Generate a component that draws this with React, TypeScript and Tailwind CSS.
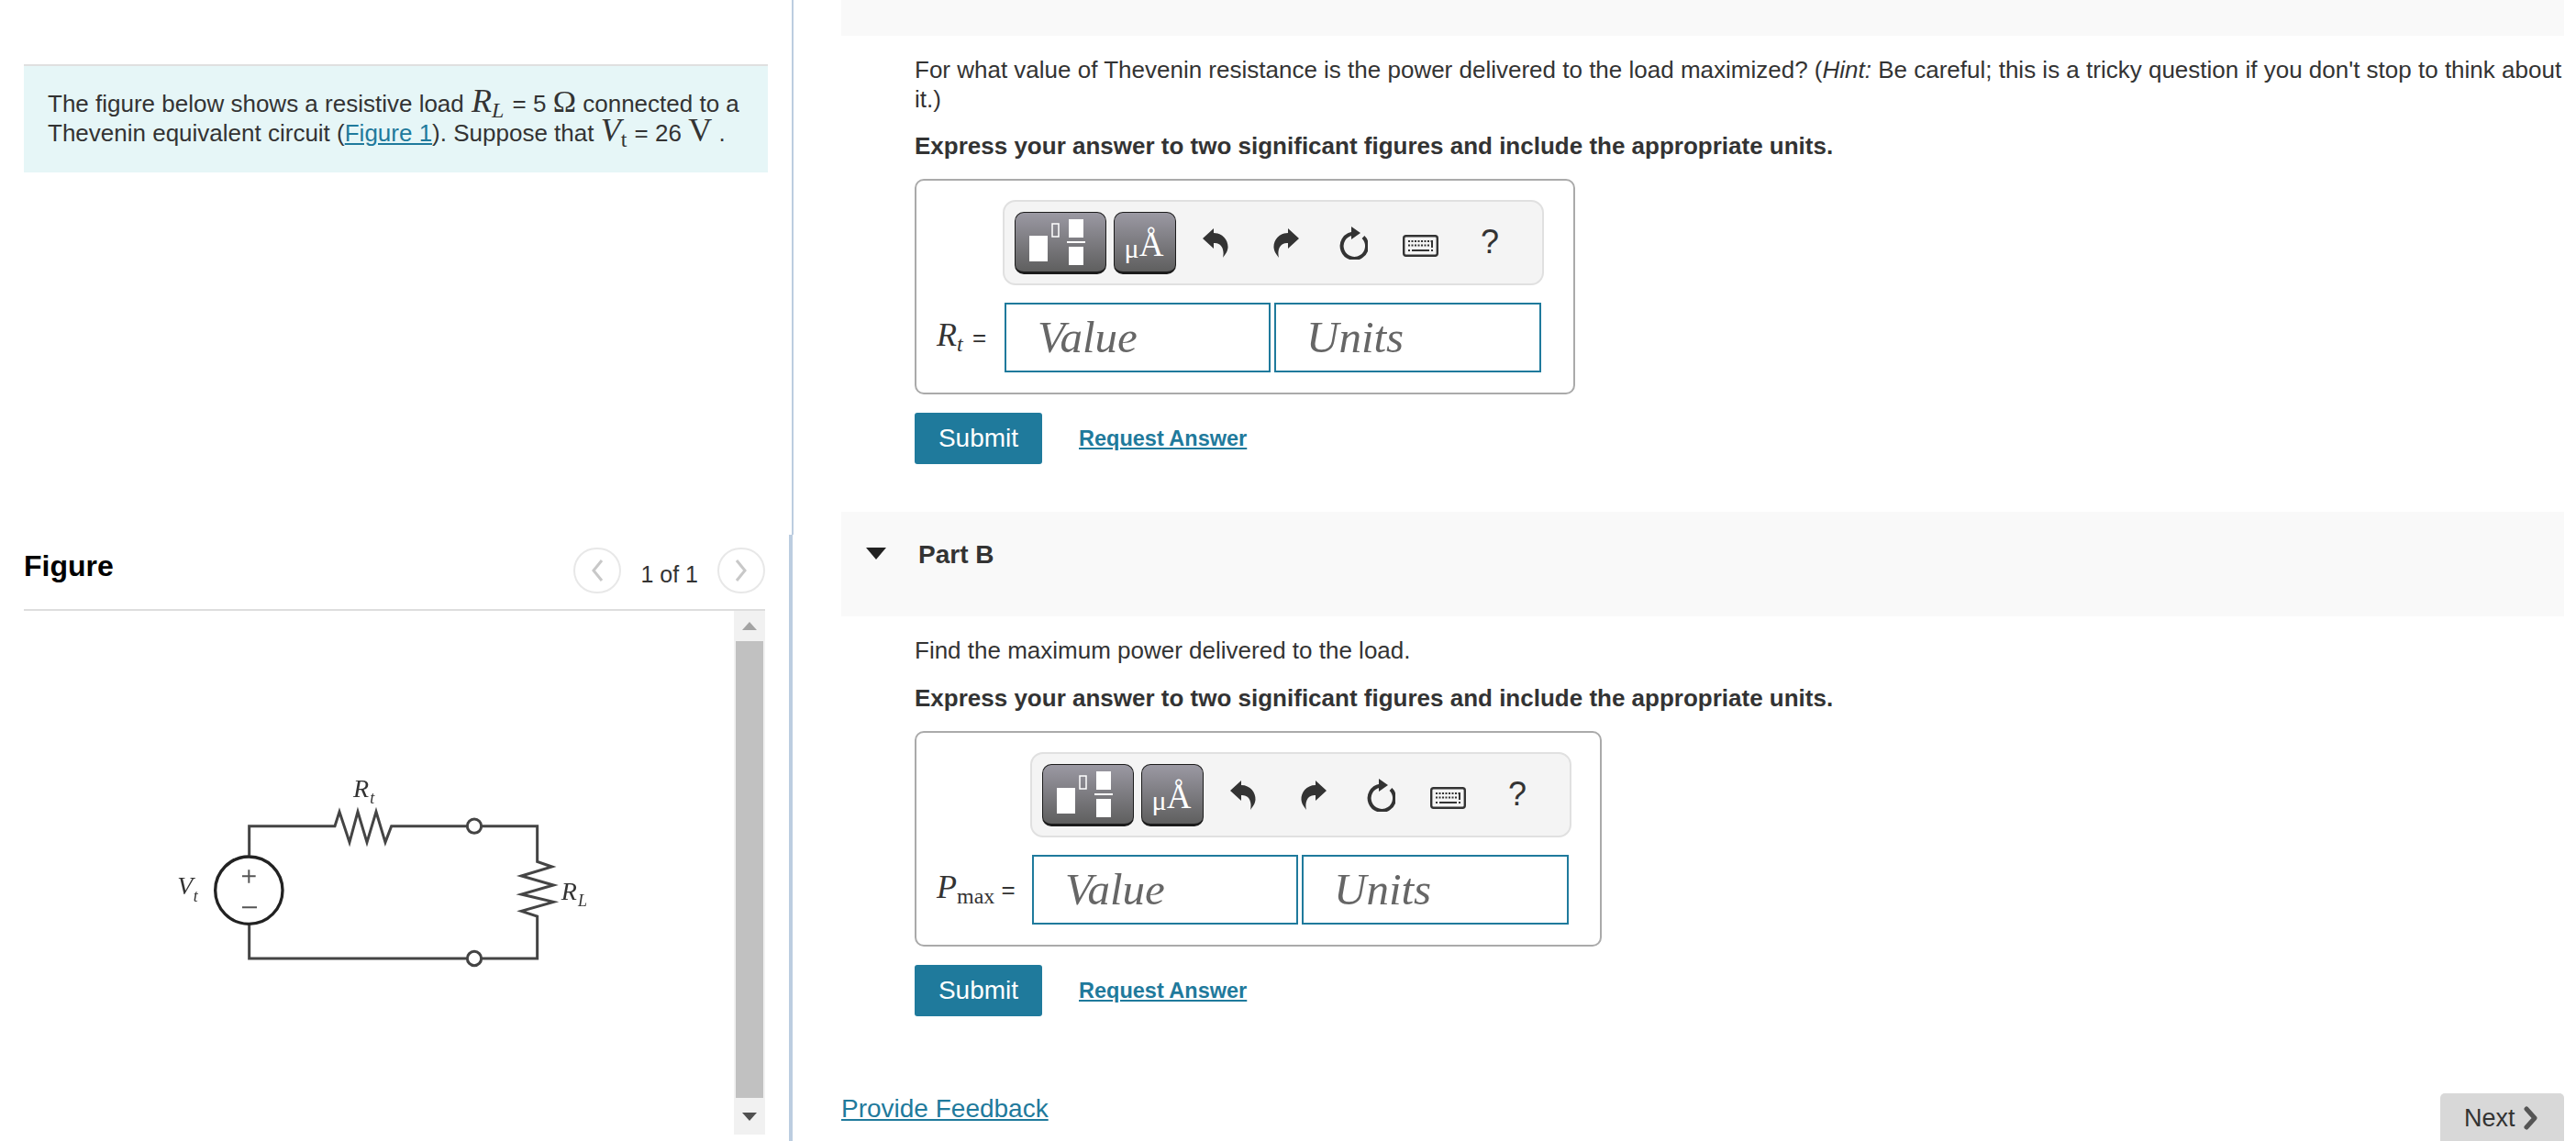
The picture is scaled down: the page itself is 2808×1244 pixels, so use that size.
const Undo = ({ flip = false }: { flip?: boolean }) => (
  <svg width="28" height="32" viewBox="0 0 28 32" className={flip ? '-scale-x-100' : ''}>
    <path d="M0 11 L12 0 V5 C22 5 28 13 27.5 21 C27 26 24 29 22 32 C24 24 21 15 12 16 V22 Z" fill="#333" />
  </svg>
);

const Reset = () => (
  <svg width="32" height="36" viewBox="0 0 32 36">
    <path d="M27 11.5 A13.7 13.7 0 1 1 15 7.7" fill="none" stroke="#333" strokeWidth="4" />
    <path d="M14 0 L24 7 L14 14 Z" fill="#333" />
  </svg>
);

const Keyboard = () => (
  <svg width="39" height="24" viewBox="0 0 39 24">
    <rect x="1.2" y="1.2" width="36.6" height="21.6" rx="2.5" fill="#f4f4f4" stroke="#333" strokeWidth="2.4" />
    {[6, 9.5, 13, 16.5, 20, 23.5, 27, 30.5].map((x) => (
      <rect key={x} x={x} y="6" width="2" height="2" fill="#333" />
    ))}
    {[6, 9.5, 13, 16.5, 20, 23.5, 27].map((x) => (
      <rect key={x} x={x} y="10.5" width="2" height="2" fill="#333" />
    ))}
    <rect x="31" y="6" width="2" height="8" fill="#333" />
    <rect x="6" y="16" width="2" height="2" fill="#333" />
    <rect x="10" y="16" width="19" height="2" fill="#333" />
    <rect x="31" y="16" width="2" height="2" fill="#333" />
  </svg>
);

const Templates = () => (
  <svg width="100" height="68" viewBox="0 0 100 68" className="absolute -top-px -left-px">
    <rect x="16" y="26" width="20" height="28" fill="#fff" />
    <rect x="41" y="13" width="7" height="14" fill="none" stroke="#fff" strokeWidth="1.5" />
    <rect x="59" y="8" width="16" height="20" fill="#fff" />
    <rect x="57" y="32" width="20" height="2" fill="#fff" />
    <rect x="59" y="38" width="16" height="20" fill="#fff" />
  </svg>
);

const AnswerBox = ({ label, boxWidth, labelWidth }: { label: React.ReactNode; boxWidth: string; labelWidth: string }) => (
  <div className={`${boxWidth} h-[235px] rounded-[10px] border-2 border-[#aaaaaa] pt-[21px]`}>
    <div className="flex">
      <div className={labelWidth}></div>
      <div className="-ml-[2px] flex h-[93px] w-[590px] items-center rounded-[14px] border-2 border-[#e0e0e0] bg-[#f4f4f4] pl-[11px]">
        <div className="relative h-[68px] w-[100px] rounded-[10px] border border-b-[3px] border-[#1c1c1c] bg-gradient-to-b from-[#9b99a3] to-[#5f5f5f]">
          <Templates />
        </div>
        <div className="ml-[8px] flex h-[68px] w-[68px] items-end justify-center rounded-[10px] border border-b-[3px] border-[#1c1c1c] bg-gradient-to-b from-[#9b99a3] to-[#5f5f5f] pb-[10px] pr-[2px] font-['Liberation_Serif'] text-white">
          <span className="text-[30px] leading-[30px]">μ</span>
          <span className="text-[37px] leading-[38px]">Å</span>
        </div>
        <div className="ml-[29px]"><Undo /></div>
        <div className="ml-[49px]"><Undo flip /></div>
        <div className="ml-[43px]"><Reset /></div>
        <div className="ml-[38px] mt-[6px]"><Keyboard /></div>
        <div className="ml-[46px] -mt-[2px] text-[36px] leading-[40px] text-[#333]">?</div>
      </div>
    </div>
    <div className="mt-[19px] flex items-center">
      <div className={`${labelWidth} pl-[22px] text-[26px]`}>{label}</div>
      <input
        placeholder="Value"
        className="h-[76px] w-[290px] border-2 border-[#1f7a9c] pb-[2px] pl-[34px] font-['Liberation_Serif'] text-[49px] italic outline-none placeholder:text-[#666]"
      />
      <input
        placeholder="Units"
        className="ml-[4px] h-[76px] w-[291px] border-2 border-[#1f7a9c] pb-[2px] pl-[33px] font-['Liberation_Serif'] text-[49px] italic outline-none placeholder:text-[#666]"
      />
    </div>
  </div>
);

const SubmitRow = () => (
  <div className="flex items-center">
    <button className="h-[56px] w-[139px] rounded-[3px] bg-[#1f7a9c] text-[28px] text-white">Submit</button>
    <a className="ml-[40px] text-[23.5px] font-bold text-[#1f7a9c] underline">Request Answer</a>
  </div>
);

const Circuit = () => (
  <svg width="520" height="260" viewBox="0 0 1560 780" className="blur-[0.5px]">
    <g fill="none" stroke="#444" strokeWidth="9" strokeLinejoin="miter">
      <path d="M365 338 V242 H645 L660 195 L693 295 L720 195 L750 295 L780 195 L810 295 L830 242 H1078" />
      <path d="M1125 242 H1307 V358 L1355 375 L1255 405 L1360 435 L1255 465 L1360 490 L1255 520 L1307 537 V675 H1125" />
      <path d="M1076 675 H365 V565" />
      <circle cx="1101" cy="242" r="23" />
      <circle cx="1101" cy="675" r="23" />
    </g>
    <circle cx="364" cy="452" r="110" fill="none" stroke="#222" strokeWidth="10" />
    <path d="M342 406 H386 M364 385 V428 M342 508 H390" fill="none" stroke="#555" strokeWidth="6" />
    <g fontFamily="Liberation Serif" fontStyle="italic" fill="#333">
      <text x="705" y="147" fontSize="84">R</text>
      <text x="760" y="167" fontSize="54">t</text>
      <text x="130" y="465" fontSize="84">V</text>
      <text x="182" y="490" fontSize="54">t</text>
      <text x="1385" y="482" fontSize="84">R</text>
      <text x="1440" y="503" fontSize="54">L</text>
    </g>
  </svg>
);

export default function App() {
  return (
    <div className="flex h-[1244px] w-[2808px] overflow-hidden bg-white font-['Liberation_Sans',sans-serif] text-[26px] leading-[32px] text-[#333]">
      {/* left column */}
      <div className="flex h-full w-[860px] shrink-0 flex-col pl-[26px]">
        <div className="mt-[70px] h-[118px] w-[811px] border-t-2 border-[#e0e0e0] bg-[#e6f6f7] pt-[25px] pl-[26px]">
          <p>
            The figure below shows a resistive load{' '}
            <span className="mr-[2px] ml-[1px] font-['Liberation_Serif'] text-[36px] italic leading-[0]">
              R<sub className="text-[24px]">L</sub>
            </span>{' '}
            = 5 <span className="font-['Liberation_Serif'] text-[34px] leading-[0]">Ω</span> connected to a
            <br />
            Thevenin equivalent circuit (<a className="text-[#1f7a9c] underline">Figure 1</a>). Suppose that{' '}
            <span className="mr-[1px] font-['Liberation_Serif'] text-[36px] italic leading-[0]">
              V<sub className="text-[24px] not-italic">t</sub>
            </span>{' '}
            = 26 <span className="font-['Liberation_Serif'] text-[36px] leading-[0]">V</span> .
          </p>
        </div>

        <div className="mt-[409px] flex h-[69px] w-[808px] items-start justify-between border-b-2 border-[#dddddd]">
          <div className="mt-[4px] text-[32px] font-bold text-black">Figure</div>
          <div className="flex items-center">
            <div className="flex h-[50px] w-[52px] items-center justify-center rounded-full border-2 border-[#e8e8e8]">
              <svg width="14" height="26" viewBox="0 0 14 26"><path d="M12 2 L3 13 L12 24" fill="none" stroke="#c8c8c8" strokeWidth="3" /></svg>
            </div>
            <span className="mt-[8px] ml-[21px] mr-[21px] text-[25px]">1 of 1</span>
            <div className="flex h-[50px] w-[52px] items-center justify-center rounded-full border-2 border-[#e8e8e8]">
              <svg width="14" height="26" viewBox="0 0 14 26"><path d="M2 2 L11 13 L2 24" fill="none" stroke="#c8c8c8" strokeWidth="3" /></svg>
            </div>
          </div>
        </div>

        <div className="flex h-[571px] w-[808px]">
          <div className="flex-1 pt-[154px] pl-[124px]">
            <Circuit />
          </div>
          <div className="flex w-[34px] flex-col items-center bg-[#f1f1f1]">
            <div className="flex h-[33px] items-center">
              <div className="h-0 w-0 border-x-[8px] border-b-[9px] border-x-transparent border-b-[#a3a3a3]"></div>
            </div>
            <div className="h-[498px] w-[30px] bg-[#c1c1c1]"></div>
            <div className="flex flex-1 items-center">
              <div className="h-0 w-0 border-x-[8px] border-t-[9px] border-x-transparent border-t-[#505050]"></div>
            </div>
          </div>
        </div>
      </div>

      {/* divider */}
      <div className="flex h-full w-[5px] shrink-0 flex-col">
        <div className="ml-[3px] h-[583px] w-[2px] bg-[#bccde0]"></div>
        <div className="w-[4px] flex-1 bg-[#bccde0]"></div>
      </div>

      {/* right column */}
      <div className="flex h-full flex-1 flex-col pl-[52px] pr-[13px]">
        <div className="h-[39px] bg-[#f9f9f9]"></div>
        <div className="pl-[80px]">
          <p className="mt-[21px]">
            For what value of Thevenin resistance is the power delivered to the load maximized? (<i>Hint:</i> Be careful; this is a tricky question if you don't stop to think about it.)
          </p>
          <p className="mt-[19px] font-bold">Express your answer to two significant figures and include the appropriate units.</p>
          <div className="mt-[20px]">
            <AnswerBox
              boxWidth="w-[720px]"
              labelWidth="w-[96px]"
              label={
                <span className="text-[26px]">
                  <span className="mr-[3px] font-['Liberation_Serif'] text-[36px] italic leading-[0]">
                    R<sub className="text-[24px]">t</sub>
                  </span>{' '}
                  =
                </span>
              }
            />
          </div>
          <div className="mt-[20px]"><SubmitRow /></div>
        </div>

        <div className="mt-[52px] flex h-[114px] items-start bg-[#f9f9f9] pt-[30px] pl-[27px]">
          <div className="mt-[9px] h-0 w-0 border-x-[11px] border-t-[13px] border-x-transparent border-t-[#222]"></div>
          <div className="mt-[1px] ml-[35px] text-[28px] font-bold">Part B</div>
        </div>

        <div className="pl-[80px]">
          <p className="mt-[21px]">Find the maximum power delivered to the load.</p>
          <p className="mt-[20px] font-bold">Express your answer to two significant figures and include the appropriate units.</p>
          <div className="mt-[20px]">
            <AnswerBox
              boxWidth="w-[749px]"
              labelWidth="w-[126px]"
              label={
                <span className="text-[26px]">
                  <span className="font-['Liberation_Serif'] text-[36px] italic leading-[0]">P</span>
                  <sub className="font-['Liberation_Serif'] text-[24px] leading-[0]">max</sub> =
                </span>
              }
            />
          </div>
          <div className="mt-[20px]"><SubmitRow /></div>
        </div>

        <div className="mt-auto flex items-start justify-between">
          <a className="mt-[1px] text-[28px] text-[#1f7a9c] underline">Provide Feedback</a>
          <div className="flex h-[52px] w-[135px] items-center rounded-t-[5px] bg-[#d8d8d8] pl-[26px] pt-[2px] text-[#333]">
            <span className="text-[27px]">Next</span>
            <svg width="16" height="26" viewBox="0 0 16 26" className="ml-[9px]">
              <path d="M3 3 L12 13 L3 23" fill="none" stroke="#555" strokeWidth="5" strokeLinecap="round" strokeLinejoin="round" />
            </svg>
          </div>
        </div>
      </div>
    </div>
  );
}
